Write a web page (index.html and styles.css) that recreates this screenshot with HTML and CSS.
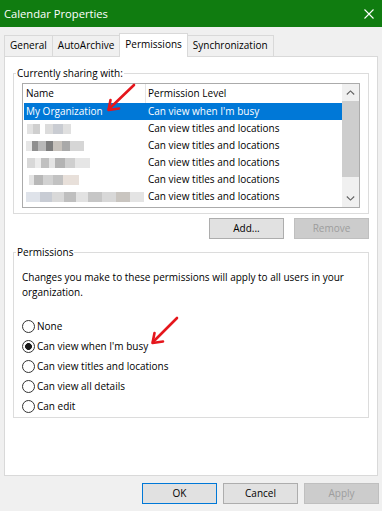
FILE: index.html
```html
<!DOCTYPE html>
<html>
<head>
<meta charset="utf-8">
<link rel="stylesheet" href="styles.css">
</head>
<body>
<div class="titlebar">
  <span class="title">Calendar Properties</span>
  <svg class="close" viewBox="0 0 10 10"><path d="M0.5 0.5 L9.5 9.5 M9.5 0.5 L0.5 9.5" stroke="#fff" stroke-width="1.1" fill="none"/></svg>
</div>
<div class="tabs">
  <div class="tab">General</div>
  <div class="tab">AutoArchive</div>
  <div class="tab active">Permissions</div>
  <div class="tab last">Synchronization</div>
</div>
<div class="panel">
  <fieldset class="group share">
    <legend>Currently sharing with:</legend>
    <div class="listbox">
      <div class="list">
        <div class="lrow head"><span class="c1">Name</span><span class="c2">Permission Level</span></div>
        <div class="lrow sel"><span class="c1">My Organization</span><span class="c2">Can view when I'm busy</span></div>
        <div class="lrow"><span class="c1"><span class="blot r2"></span></span><span class="c2">Can view titles and locations</span></div>
        <div class="lrow"><span class="c1"><span class="blot r3"></span></span><span class="c2">Can view titles and locations</span></div>
        <div class="lrow"><span class="c1"><span class="blot r4"></span></span><span class="c2">Can view titles and locations</span></div>
        <div class="lrow"><span class="c1"><span class="blot r5"></span></span><span class="c2">Can view titles and locations</span></div>
        <div class="lrow"><span class="c1"><span class="blot r6"></span></span><span class="c2">Can view titles and locations</span></div>
      </div>
      <div class="scrollbar">
        <div class="sb-btn"><svg viewBox="0 0 9 5" class="chev"><path d="M0.8 4.5 L4.5 0.9 L8.2 4.5" stroke="#606060" stroke-width="1.1" fill="none"/></svg></div>
        <div class="thumb"></div>
        <div class="track"></div>
        <div class="sb-btn"><svg viewBox="0 0 9 5" class="chev"><path d="M0.8 0.5 L4.5 4.1 L8.2 0.5" stroke="#606060" stroke-width="1.1" fill="none"/></svg></div>
      </div>
    </div>
  </fieldset>
  <div class="btnrow">
    <button class="btn">Add...</button>
    <button class="btn disabled">Remove</button>
  </div>
  <fieldset class="group perms">
    <legend>Permissions</legend>
    <p class="note">Changes you make to these permissions will apply to all users in your<br>organization.</p>
    <div class="radios">
      <div class="ropt"><span class="radio"></span>None</div>
      <div class="ropt"><span class="radio checked"></span>Can view when I'm busy</div>
      <div class="ropt"><span class="radio"></span>Can view titles and locations</div>
      <div class="ropt"><span class="radio"></span>Can view all details</div>
      <div class="ropt"><span class="radio"></span>Can edit</div>
    </div>
  </fieldset>
</div>
<div class="footer">
  <button class="btn ok">OK</button>
  <button class="btn">Cancel</button>
  <button class="btn disabled">Apply</button>
</div>
<svg class="arrows" viewBox="0 0 382 511">
  <g stroke="#e5161c" stroke-width="2.6" fill="none" stroke-linecap="round" stroke-linejoin="round">
    <path d="M134 85 L109 109"/>
    <path d="M110.5 100 L108.5 110 L119 108.5"/>
    <path d="M177 318 L153 342"/>
    <path d="M154.5 333 L152.5 343 L163 341.5"/>
  </g>
</svg>
</body>
</html>
```
FILE: styles.css
```css
* { box-sizing: border-box; }
html, body { margin: 0; padding: 0; }
body {
  width: 382px;
  height: 511px;
  background: #f0f0f0;
  font-family: "Open Sans", "Noto Sans", sans-serif;
  font-size: 10px;
  color: #000;
  overflow: hidden;
  position: relative;
}
.titlebar {
  height: 27px;
  background: #107c10;
  color: #fff;
  display: flex;
  align-items: center;
  justify-content: space-between;
  padding: 0 8px 0 4px;
}
.title { font-size: 11.2px; line-height: 14px; }
.close { width: 10px; height: 10px; display: block; }

.tabs {
  display: flex;
  align-items: flex-end;
  height: 29px;
  padding-left: 4px;
}
.tab {
  height: 21px;
  padding: 0 5px;
  border: 1px solid #d9d9d9;
  border-bottom: none;
  border-right: none;
  background: #f0f0f0;
  line-height: 19px;
  white-space: nowrap;
}
.tab.active {
  height: 24px;
  padding-top: 3px;
  background: #fff;
  margin-bottom: -1px;
  border-right: 1px solid #d9d9d9;
  position: relative;
  z-index: 1;
  line-height: 14px;
}
.tab.active + .tab { border-left: none; }
.tab.last { border-right: 1px solid #d9d9d9; }

.panel {
  height: 420px;
  margin: 0 4px;
  background: #fff;
  border: 1px solid #d9d9d9;
  padding: 10px 8px 0;
}
.group {
  margin: 0;
  border: 1px solid #dcdcdc;
  min-width: 0;
  padding: 4px 8px 5px;
}
.group legend {
  margin-left: -6px;
  padding: 0 1px;
  line-height: 12px;
}
.listbox {
  height: 125px;
  border: 1px solid #ababab;
  display: flex;
  background: #fff;
}
.list { flex: 1; padding-left: 1px; }
.lrow {
  display: flex;
  height: 17px;
  line-height: 17px;
  white-space: nowrap;
}
.lrow.head { height: 19px; line-height: 19px; }
.c1 { width: 121px; padding-left: 2px; flex: none; display: flex; align-items: center; }
.c2 { padding-left: 3px; flex: 1; }
.head .c2 { border-left: 1px solid #e5e5e5; padding-left: 2px; }
.lrow.sel { background: #0078d7; color: #fff; }

.blot {
  display: block;
  height: 10px;
  filter: blur(0.6px);
}
.r2 { width: 44px; margin-left: 1px; background: linear-gradient(90deg, #e2e2e2 0 6px, #cfcfcf 6px 13px, transparent 13px 18px, #dcdcdc 18px 26px, #c9ccd2 26px 36px, #e0e0e0 36px 44px); }
.r3 { width: 58px; margin-left: 0; background: linear-gradient(90deg, #e6e6e6 0 6px, #8f8f8f 6px 12px, #b8b8b8 12px 20px, #7d7d7d 20px 27px, #c7c2bc 27px 36px, #a9a9a9 36px 44px, #d6d6d6 44px 58px); }
.r4 { width: 63px; margin-left: 1px; background: linear-gradient(90deg, #d8d8d8 0 8px, #ececec 8px 14px, #c0c0c0 14px 22px, #e4e4e4 22px 28px, #b3b3b3 28px 38px, #cfcfcf 38px 48px, #e6e6e6 48px 63px); }
.r5 { width: 50px; margin-left: 3px; background: linear-gradient(90deg, #e4e4e4 0 5px, #b8b8b8 5px 14px, #d2d2d2 14px 24px, #c2c2c2 24px 34px, #e8e0da 34px 50px); }
.r6 { width: 118px; margin-left: 0; background: linear-gradient(90deg, #dfe3ea 0 14px, #c8ccd4 14px 26px, #d9d9d9 26px 38px, #bfbfbf 38px 50px, #e2e2e2 50px 62px, #c6c6c6 62px 76px, #d8d8d8 76px 90px, #c9c5c0 90px 104px, #e4e4e4 104px 118px); }

.scrollbar {
  width: 17px;
  flex: none;
  display: flex;
  flex-direction: column;
  background: #f0f0f0;
}
.sb-btn {
  height: 17px;
  display: flex;
  align-items: center;
  justify-content: center;
  background: #f0f0f0;
}
.chev { width: 9px; height: 5px; display: block; }
.thumb { height: 76px; background: #cdcdcd; }
.track { flex: 1; }

.btnrow {
  display: flex;
  justify-content: flex-end;
  gap: 10px;
  margin-top: 4px;
}
.btn {
  width: 75px;
  height: 21px;
  border: 1px solid #adadad;
  background: #e1e1e1;
  font-family: inherit;
  font-size: 10px;
  color: #000;
  padding: 0;
  line-height: 19px;
}
.btn.disabled { background: #cccccc; border-color: #bfbfbf; color: #9d9d9d; }
.btn.ok { border-color: #0078d7; }

.perms { margin-top: 7px; padding: 12px 8px 1px; }
.note { margin: 0 0 16px; line-height: 15px; }
.ropt {
  height: 20px;
  display: flex;
  align-items: center;
}
.radio {
  width: 13px;
  height: 13px;
  border: 1px solid #333;
  border-radius: 50%;
  margin-right: 2px;
  background: #fff;
  flex: none;
}
.radio.checked { background: radial-gradient(circle, #1a1a1a 0 3.1px, #fff 3.7px); }

.footer {
  display: flex;
  justify-content: flex-end;
  gap: 6px;
  padding: 7px 3px 0 0;
}
.arrows {
  position: absolute;
  left: 0;
  top: 0;
  width: 382px;
  height: 511px;
  pointer-events: none;
}
```
